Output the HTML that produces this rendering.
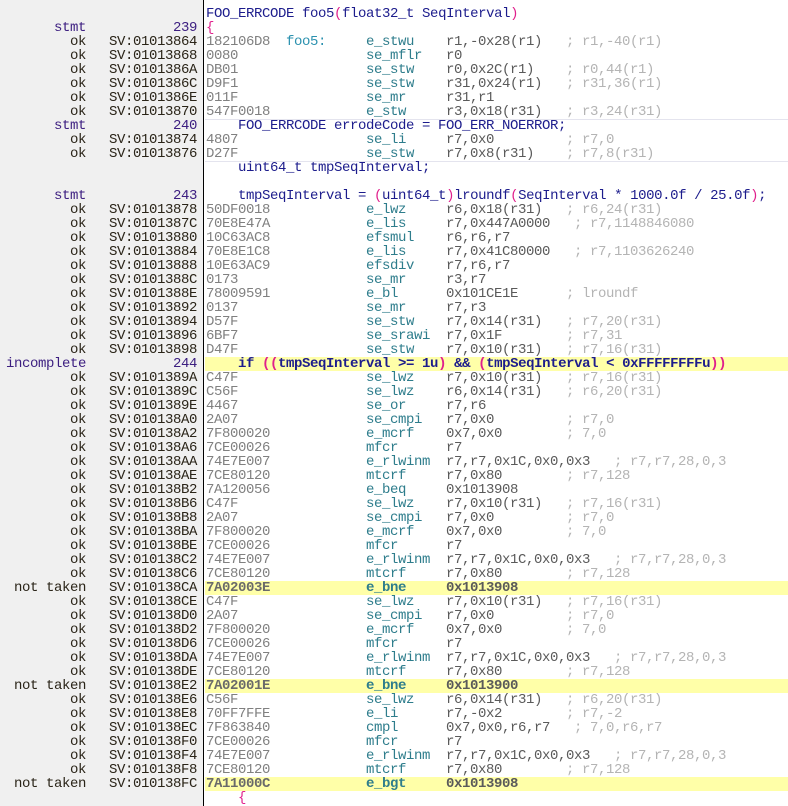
<!DOCTYPE html>
<html><head><meta charset="utf-8"><style>
*{margin:0;padding:0;box-sizing:border-box}
body{width:788px;height:806px;overflow:hidden;background:#fff;font-family:"Liberation Mono",monospace;font-size:14px;letter-spacing:-0.4px;position:relative}
#L{position:absolute;left:0;top:0;width:204px;height:806px;background:#f0f0f0;border-right:1px solid #000;padding-top:7px}
#R{position:absolute;left:205px;top:0;width:583px;height:806px;padding-top:7px}
.r{height:14px;line-height:14px;white-space:pre}
#L .r span{display:inline-block;text-align:right}
.a{width:86px}.b{width:111px}
.p{color:#3c1e80}.k{color:#2a2418}
#R .r{padding-left:1px}
.h{display:inline-block;width:80px;color:#808080}
.l{display:inline-block;width:80px;color:#2b91af}
.m{display:inline-block;width:80px;color:#2e7d8c}
.o{display:inline-block;min-width:120px;padding-right:24px;color:#5a5a5a}
.c{color:#b4b4b4}
.s{color:#1c1c8c}
.q{color:#e0208c}
.s0{border-top:1px solid #e4e4ee;line-height:13px}
.y{background:#ffffa8;font-weight:bold}
.y .h{color:#6a6a6a}
</style></head><body>
<div id="L">
<div class="r"></div>
<div class="r"><span class="a p">stmt</span><span class="b p">239</span></div>
<div class="r"><span class="a k">ok</span><span class="b k">SV:01013864</span></div>
<div class="r"><span class="a k">ok</span><span class="b k">SV:01013868</span></div>
<div class="r"><span class="a k">ok</span><span class="b k">SV:0101386A</span></div>
<div class="r"><span class="a k">ok</span><span class="b k">SV:0101386C</span></div>
<div class="r"><span class="a k">ok</span><span class="b k">SV:0101386E</span></div>
<div class="r"><span class="a k">ok</span><span class="b k">SV:01013870</span></div>
<div class="r"><span class="a p">stmt</span><span class="b p">240</span></div>
<div class="r"><span class="a k">ok</span><span class="b k">SV:01013874</span></div>
<div class="r"><span class="a k">ok</span><span class="b k">SV:01013876</span></div>
<div class="r"></div>
<div class="r"></div>
<div class="r"><span class="a p">stmt</span><span class="b p">243</span></div>
<div class="r"><span class="a k">ok</span><span class="b k">SV:01013878</span></div>
<div class="r"><span class="a k">ok</span><span class="b k">SV:0101387C</span></div>
<div class="r"><span class="a k">ok</span><span class="b k">SV:01013880</span></div>
<div class="r"><span class="a k">ok</span><span class="b k">SV:01013884</span></div>
<div class="r"><span class="a k">ok</span><span class="b k">SV:01013888</span></div>
<div class="r"><span class="a k">ok</span><span class="b k">SV:0101388C</span></div>
<div class="r"><span class="a k">ok</span><span class="b k">SV:0101388E</span></div>
<div class="r"><span class="a k">ok</span><span class="b k">SV:01013892</span></div>
<div class="r"><span class="a k">ok</span><span class="b k">SV:01013894</span></div>
<div class="r"><span class="a k">ok</span><span class="b k">SV:01013896</span></div>
<div class="r"><span class="a k">ok</span><span class="b k">SV:01013898</span></div>
<div class="r"><span class="a p">incomplete</span><span class="b p">244</span></div>
<div class="r"><span class="a k">ok</span><span class="b k">SV:0101389A</span></div>
<div class="r"><span class="a k">ok</span><span class="b k">SV:0101389C</span></div>
<div class="r"><span class="a k">ok</span><span class="b k">SV:0101389E</span></div>
<div class="r"><span class="a k">ok</span><span class="b k">SV:010138A0</span></div>
<div class="r"><span class="a k">ok</span><span class="b k">SV:010138A2</span></div>
<div class="r"><span class="a k">ok</span><span class="b k">SV:010138A6</span></div>
<div class="r"><span class="a k">ok</span><span class="b k">SV:010138AA</span></div>
<div class="r"><span class="a k">ok</span><span class="b k">SV:010138AE</span></div>
<div class="r"><span class="a k">ok</span><span class="b k">SV:010138B2</span></div>
<div class="r"><span class="a k">ok</span><span class="b k">SV:010138B6</span></div>
<div class="r"><span class="a k">ok</span><span class="b k">SV:010138B8</span></div>
<div class="r"><span class="a k">ok</span><span class="b k">SV:010138BA</span></div>
<div class="r"><span class="a k">ok</span><span class="b k">SV:010138BE</span></div>
<div class="r"><span class="a k">ok</span><span class="b k">SV:010138C2</span></div>
<div class="r"><span class="a k">ok</span><span class="b k">SV:010138C6</span></div>
<div class="r"><span class="a k">not taken</span><span class="b k">SV:010138CA</span></div>
<div class="r"><span class="a k">ok</span><span class="b k">SV:010138CE</span></div>
<div class="r"><span class="a k">ok</span><span class="b k">SV:010138D0</span></div>
<div class="r"><span class="a k">ok</span><span class="b k">SV:010138D2</span></div>
<div class="r"><span class="a k">ok</span><span class="b k">SV:010138D6</span></div>
<div class="r"><span class="a k">ok</span><span class="b k">SV:010138DA</span></div>
<div class="r"><span class="a k">ok</span><span class="b k">SV:010138DE</span></div>
<div class="r"><span class="a k">not taken</span><span class="b k">SV:010138E2</span></div>
<div class="r"><span class="a k">ok</span><span class="b k">SV:010138E6</span></div>
<div class="r"><span class="a k">ok</span><span class="b k">SV:010138E8</span></div>
<div class="r"><span class="a k">ok</span><span class="b k">SV:010138EC</span></div>
<div class="r"><span class="a k">ok</span><span class="b k">SV:010138F0</span></div>
<div class="r"><span class="a k">ok</span><span class="b k">SV:010138F4</span></div>
<div class="r"><span class="a k">ok</span><span class="b k">SV:010138F8</span></div>
<div class="r"><span class="a k">not taken</span><span class="b k">SV:010138FC</span></div>
</div>
<div id="R">
<div class="r s">FOO_ERRCODE foo5<span class="q">(</span>float32_t SeqInterval<span class="q">)</span></div>
<div class="r q">{</div>
<div class="r"><span class="h">182106D8</span><span class="l">foo5:</span><span class="m">e_stwu</span><span class="o">r1,-0x28(r1)</span><span class="c">; r1,-40(r1)</span></div>
<div class="r"><span class="h">0080</span><span class="l"></span><span class="m">se_mflr</span><span class="o">r0</span></div>
<div class="r"><span class="h">DB01</span><span class="l"></span><span class="m">se_stw</span><span class="o">r0,0x2C(r1)</span><span class="c">; r0,44(r1)</span></div>
<div class="r"><span class="h">D9F1</span><span class="l"></span><span class="m">se_stw</span><span class="o">r31,0x24(r1)</span><span class="c">; r31,36(r1)</span></div>
<div class="r"><span class="h">011F</span><span class="l"></span><span class="m">se_mr</span><span class="o">r31,r1</span></div>
<div class="r"><span class="h">547F0018</span><span class="l"></span><span class="m">e_stw</span><span class="o">r3,0x18(r31)</span><span class="c">; r3,24(r31)</span></div>
<div class="r s s0">    FOO_ERRCODE errodeCode = FOO_ERR_NOERROR;</div>
<div class="r"><span class="h">4807</span><span class="l"></span><span class="m">se_li</span><span class="o">r7,0x0</span><span class="c">; r7,0</span></div>
<div class="r"><span class="h">D27F</span><span class="l"></span><span class="m">se_stw</span><span class="o">r7,0x8(r31)</span><span class="c">; r7,8(r31)</span></div>
<div class="r s s0">    uint64_t tmpSeqInterval;</div>
<div class="r"></div>
<div class="r s">    tmpSeqInterval = <span class="q">(</span>uint64_t<span class="q">)</span>lroundf<span class="q">(</span>SeqInterval * 1000.0f / 25.0f<span class="q">)</span>;</div>
<div class="r"><span class="h">50DF0018</span><span class="l"></span><span class="m">e_lwz</span><span class="o">r6,0x18(r31)</span><span class="c">; r6,24(r31)</span></div>
<div class="r"><span class="h">70E8E47A</span><span class="l"></span><span class="m">e_lis</span><span class="o">r7,0x447A0000</span><span class="c">; r7,1148846080</span></div>
<div class="r"><span class="h">10C63AC8</span><span class="l"></span><span class="m">efsmul</span><span class="o">r6,r6,r7</span></div>
<div class="r"><span class="h">70E8E1C8</span><span class="l"></span><span class="m">e_lis</span><span class="o">r7,0x41C80000</span><span class="c">; r7,1103626240</span></div>
<div class="r"><span class="h">10E63AC9</span><span class="l"></span><span class="m">efsdiv</span><span class="o">r7,r6,r7</span></div>
<div class="r"><span class="h">0173</span><span class="l"></span><span class="m">se_mr</span><span class="o">r3,r7</span></div>
<div class="r"><span class="h">78009591</span><span class="l"></span><span class="m">e_bl</span><span class="o">0x101CE1E</span><span class="c">; lroundf</span></div>
<div class="r"><span class="h">0137</span><span class="l"></span><span class="m">se_mr</span><span class="o">r7,r3</span></div>
<div class="r"><span class="h">D57F</span><span class="l"></span><span class="m">se_stw</span><span class="o">r7,0x14(r31)</span><span class="c">; r7,20(r31)</span></div>
<div class="r"><span class="h">6BF7</span><span class="l"></span><span class="m">se_srawi</span><span class="o">r7,0x1F</span><span class="c">; r7,31</span></div>
<div class="r"><span class="h">D47F</span><span class="l"></span><span class="m">se_stw</span><span class="o">r7,0x10(r31)</span><span class="c">; r7,16(r31)</span></div>
<div class="r s y">    if <span class="q">((</span>tmpSeqInterval &gt;= 1u<span class="q">)</span> &amp;&amp; <span class="q">(</span>tmpSeqInterval &lt; 0xFFFFFFFFu<span class="q">))</span></div>
<div class="r"><span class="h">C47F</span><span class="l"></span><span class="m">se_lwz</span><span class="o">r7,0x10(r31)</span><span class="c">; r7,16(r31)</span></div>
<div class="r"><span class="h">C56F</span><span class="l"></span><span class="m">se_lwz</span><span class="o">r6,0x14(r31)</span><span class="c">; r6,20(r31)</span></div>
<div class="r"><span class="h">4467</span><span class="l"></span><span class="m">se_or</span><span class="o">r7,r6</span></div>
<div class="r"><span class="h">2A07</span><span class="l"></span><span class="m">se_cmpi</span><span class="o">r7,0x0</span><span class="c">; r7,0</span></div>
<div class="r"><span class="h">7F800020</span><span class="l"></span><span class="m">e_mcrf</span><span class="o">0x7,0x0</span><span class="c">; 7,0</span></div>
<div class="r"><span class="h">7CE00026</span><span class="l"></span><span class="m">mfcr</span><span class="o">r7</span></div>
<div class="r"><span class="h">74E7E007</span><span class="l"></span><span class="m">e_rlwinm</span><span class="o">r7,r7,0x1C,0x0,0x3</span><span class="c">; r7,r7,28,0,3</span></div>
<div class="r"><span class="h">7CE80120</span><span class="l"></span><span class="m">mtcrf</span><span class="o">r7,0x80</span><span class="c">; r7,128</span></div>
<div class="r"><span class="h">7A120056</span><span class="l"></span><span class="m">e_beq</span><span class="o">0x1013908</span></div>
<div class="r"><span class="h">C47F</span><span class="l"></span><span class="m">se_lwz</span><span class="o">r7,0x10(r31)</span><span class="c">; r7,16(r31)</span></div>
<div class="r"><span class="h">2A07</span><span class="l"></span><span class="m">se_cmpi</span><span class="o">r7,0x0</span><span class="c">; r7,0</span></div>
<div class="r"><span class="h">7F800020</span><span class="l"></span><span class="m">e_mcrf</span><span class="o">0x7,0x0</span><span class="c">; 7,0</span></div>
<div class="r"><span class="h">7CE00026</span><span class="l"></span><span class="m">mfcr</span><span class="o">r7</span></div>
<div class="r"><span class="h">74E7E007</span><span class="l"></span><span class="m">e_rlwinm</span><span class="o">r7,r7,0x1C,0x0,0x3</span><span class="c">; r7,r7,28,0,3</span></div>
<div class="r"><span class="h">7CE80120</span><span class="l"></span><span class="m">mtcrf</span><span class="o">r7,0x80</span><span class="c">; r7,128</span></div>
<div class="r y"><span class="h">7A02003E</span><span class="l"></span><span class="m">e_bne</span><span class="o">0x1013908</span></div>
<div class="r"><span class="h">C47F</span><span class="l"></span><span class="m">se_lwz</span><span class="o">r7,0x10(r31)</span><span class="c">; r7,16(r31)</span></div>
<div class="r"><span class="h">2A07</span><span class="l"></span><span class="m">se_cmpi</span><span class="o">r7,0x0</span><span class="c">; r7,0</span></div>
<div class="r"><span class="h">7F800020</span><span class="l"></span><span class="m">e_mcrf</span><span class="o">0x7,0x0</span><span class="c">; 7,0</span></div>
<div class="r"><span class="h">7CE00026</span><span class="l"></span><span class="m">mfcr</span><span class="o">r7</span></div>
<div class="r"><span class="h">74E7E007</span><span class="l"></span><span class="m">e_rlwinm</span><span class="o">r7,r7,0x1C,0x0,0x3</span><span class="c">; r7,r7,28,0,3</span></div>
<div class="r"><span class="h">7CE80120</span><span class="l"></span><span class="m">mtcrf</span><span class="o">r7,0x80</span><span class="c">; r7,128</span></div>
<div class="r y"><span class="h">7A02001E</span><span class="l"></span><span class="m">e_bne</span><span class="o">0x1013900</span></div>
<div class="r"><span class="h">C56F</span><span class="l"></span><span class="m">se_lwz</span><span class="o">r6,0x14(r31)</span><span class="c">; r6,20(r31)</span></div>
<div class="r"><span class="h">70FF7FFE</span><span class="l"></span><span class="m">e_li</span><span class="o">r7,-0x2</span><span class="c">; r7,-2</span></div>
<div class="r"><span class="h">7F863840</span><span class="l"></span><span class="m">cmpl</span><span class="o">0x7,0x0,r6,r7</span><span class="c">; 7,0,r6,r7</span></div>
<div class="r"><span class="h">7CE00026</span><span class="l"></span><span class="m">mfcr</span><span class="o">r7</span></div>
<div class="r"><span class="h">74E7E007</span><span class="l"></span><span class="m">e_rlwinm</span><span class="o">r7,r7,0x1C,0x0,0x3</span><span class="c">; r7,r7,28,0,3</span></div>
<div class="r"><span class="h">7CE80120</span><span class="l"></span><span class="m">mtcrf</span><span class="o">r7,0x80</span><span class="c">; r7,128</span></div>
<div class="r y"><span class="h">7A11000C</span><span class="l"></span><span class="m">e_bgt</span><span class="o">0x1013908</span></div>
<div class="r q">    {</div>
</div>
</body></html>
